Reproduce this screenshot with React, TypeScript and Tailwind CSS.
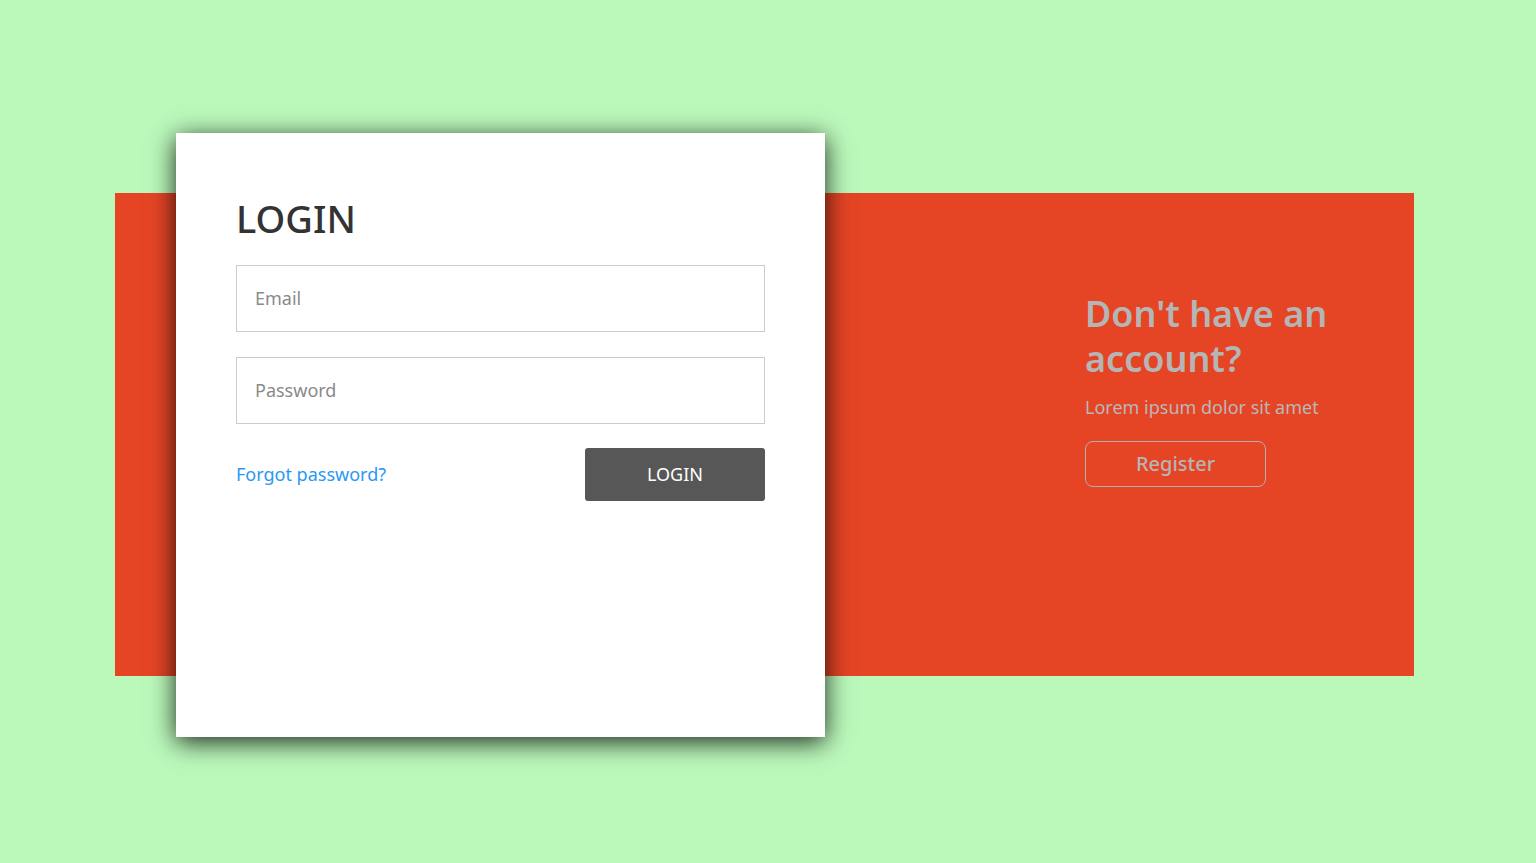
import React from "react";

const font = { fontFamily: '"Noto Sans", "Open Sans", sans-serif' };

function LoginCard() {
  return (
    <div className="w-[649px] h-[604px] shrink-0 bg-white px-[60px] pt-[66px] shadow-[0_5px_24px_rgba(0,0,0,0.85)]">
      <h1 className="text-[38px] leading-[38px] font-medium text-[#333333] mb-[28px]">LOGIN</h1>
      <form className="flex flex-col gap-[25px]" onSubmit={(e) => e.preventDefault()}>
        <input
          type="email"
          placeholder="Email"
          className="h-[67px] w-full border border-[#cccccc] px-[18px] text-[18px] text-[#555] placeholder:text-[#8a8a8a] outline-none"
          style={font}
        />
        <input
          type="password"
          placeholder="Password"
          className="h-[67px] w-full border border-[#cccccc] px-[18px] text-[18px] text-[#555] placeholder:text-[#8a8a8a] outline-none"
          style={font}
        />
        <div className="flex items-center justify-between -mt-[1px]">
          <a href="#" className="text-[18px] text-[#2b98f3]">
            Forgot password?
          </a>
          <button
            type="submit"
            className="h-[53px] w-[180px] rounded-[3px] bg-[#575757] text-[18px] text-white"
            style={font}
          >
            LOGIN
          </button>
        </div>
      </form>
    </div>
  );
}

export default function App() {
  return (
    <div
      className="min-h-[863px] w-full bg-[#bbf9bb] flex items-center justify-center pt-[6px] pr-[7px]"
      style={font}
    >
      <div className="w-[1299px] h-[483px] bg-[#e64525] flex items-center pl-[61px]">
        <LoginCard />
        <div className="self-start pt-[98px] pl-[260px]">
          <h2 className="w-[300px] text-[36px] leading-[45px] font-semibold text-[#b5b5b5]">
            Don't have an account?
          </h2>
          <p className="mt-[13px] text-[18px] leading-[27px] text-[#b8b8b8]">
            Lorem ipsum dolor sit amet
          </p>
          <button
            className="mt-[20px] h-[46px] w-[181px] rounded-lg border border-[#b0b0b0] text-[20px] font-medium text-[#b5b5b5]"
            style={font}
          >
            Register
          </button>
        </div>
      </div>
    </div>
  );
}
